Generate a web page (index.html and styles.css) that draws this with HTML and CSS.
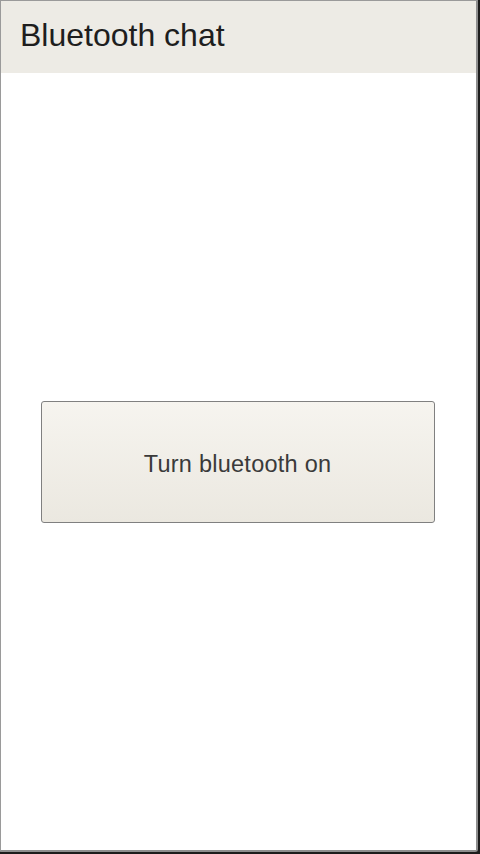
FILE: index.html
```html
<!DOCTYPE html>
<html>
<head>
<meta charset="utf-8">
<link rel="stylesheet" href="styles.css">
</head>
<body>
<div class="window">
  <header class="titlebar">
    <h1 class="title">Bluetooth chat</h1>
  </header>
  <main class="content">
    <button class="btn" type="button">Turn bluetooth on</button>
  </main>
</div>
</body>
</html>
```
FILE: styles.css
```css
html, body {
  margin: 0;
  padding: 0;
  width: 480px;
  height: 854px;
  background: #1c1c1c;
  overflow: hidden;
}
.window {
  box-sizing: border-box;
  width: 478px;
  height: 852px;
  border-left: 1px solid #9a9a9a;
  border-top: 1px solid #9a9a9a;
  border-right: 2px solid #8e8e8e;
  border-bottom: 2px solid #8e8e8e;
  border-bottom-right-radius: 3px;
  background: #ffffff;
  display: flex;
  flex-direction: column;
}
.titlebar {
  height: 72px;
  background: #edebe5;
  display: flex;
  align-items: center;
  padding-left: 19px;
}
.title {
  margin: 0;
  font-family: "Liberation Sans", Arial, sans-serif;
  font-weight: normal;
  font-size: 32px;
  color: #1e1e1e;
  position: relative;
  top: -2px;
}
.content {
  flex: 1;
  display: flex;
  align-items: flex-start;
  justify-content: center;
  padding-top: 328px;
  padding-right: 2px;
}
.btn {
  width: 394px;
  height: 122px;
  border: 1px solid #808080;
  border-radius: 3px;
  background: linear-gradient(#f6f4ef, #ebe8e0);
  font-family: "Liberation Sans", Arial, sans-serif;
  font-size: 23.5px;
  letter-spacing: 0.25px;
  color: #3a3a3a;
  padding: 4px 0 0 0;
  margin: 0;
}
```
